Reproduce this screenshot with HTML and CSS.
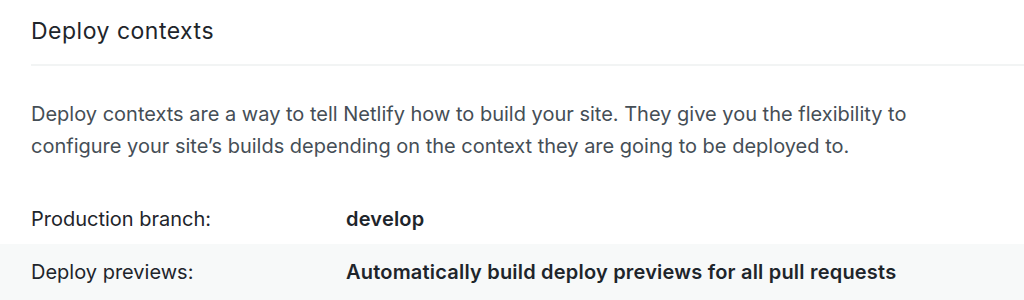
FILE: index.html
```html
<!DOCTYPE html>
<html lang="en">
<head>
    <meta charset="UTF-8">
    <title>Deploy contexts</title>
    <link rel="stylesheet" href="styles.css">
</head>
<body>
    <section class="card">
        <header class="card-header">
            <h2 class="card-title">Deploy contexts</h2>
        </header>

        <p class="card-description">
            Deploy contexts are a way to tell Netlify how to build your site. They give you the flexibility to
            configure your site’s builds depending on the context they are going to be deployed to.
        </p>

        <dl class="settings-list">
            <div class="settings-row first">
                <dt>Production branch:</dt>
                <dd>develop</dd>
            </div>
            <div class="settings-row striped">
                <dt>Deploy previews:</dt>
                <dd>Automatically build deploy previews for all pull requests</dd>
            </div>
        </dl>
    </section>
</body>
</html>
```

FILE: styles.css
```css
* {
    margin: 0;
    padding: 0;
    box-sizing: border-box;
}

body {
    font-family: 'Inter', 'Liberation Sans', sans-serif;
    background-color: #ffffff;
    color: #1e252b;
}

.card-header {
    margin-left: 31px;
    height: 66px;
    border-bottom: 2px solid #f2f4f4;
}

.card-title {
    font-size: 23px;
    font-weight: 400;
    letter-spacing: 0.5px;
    line-height: 62px;
    color: #1e252b;
}

.card-description {
    margin: 32px 0 0 31px;
    max-width: 920px;
    font-size: 20px;
    line-height: 32px;
    color: #454e56;
}

.settings-list {
    margin-top: 26px;
}

.settings-row {
    display: grid;
    grid-template-columns: 315px 1fr;
    align-items: center;
    height: 56px;
    padding-left: 31px;
    font-size: 20px;
}

.settings-row.first {
    padding-top: 6px;
}

.settings-row.striped {
    background-color: #f7f9f9;
}

.settings-row dt {
    font-weight: 400;
}

.settings-row dd {
    font-weight: 600;
    letter-spacing: 0.2px;
}
```
